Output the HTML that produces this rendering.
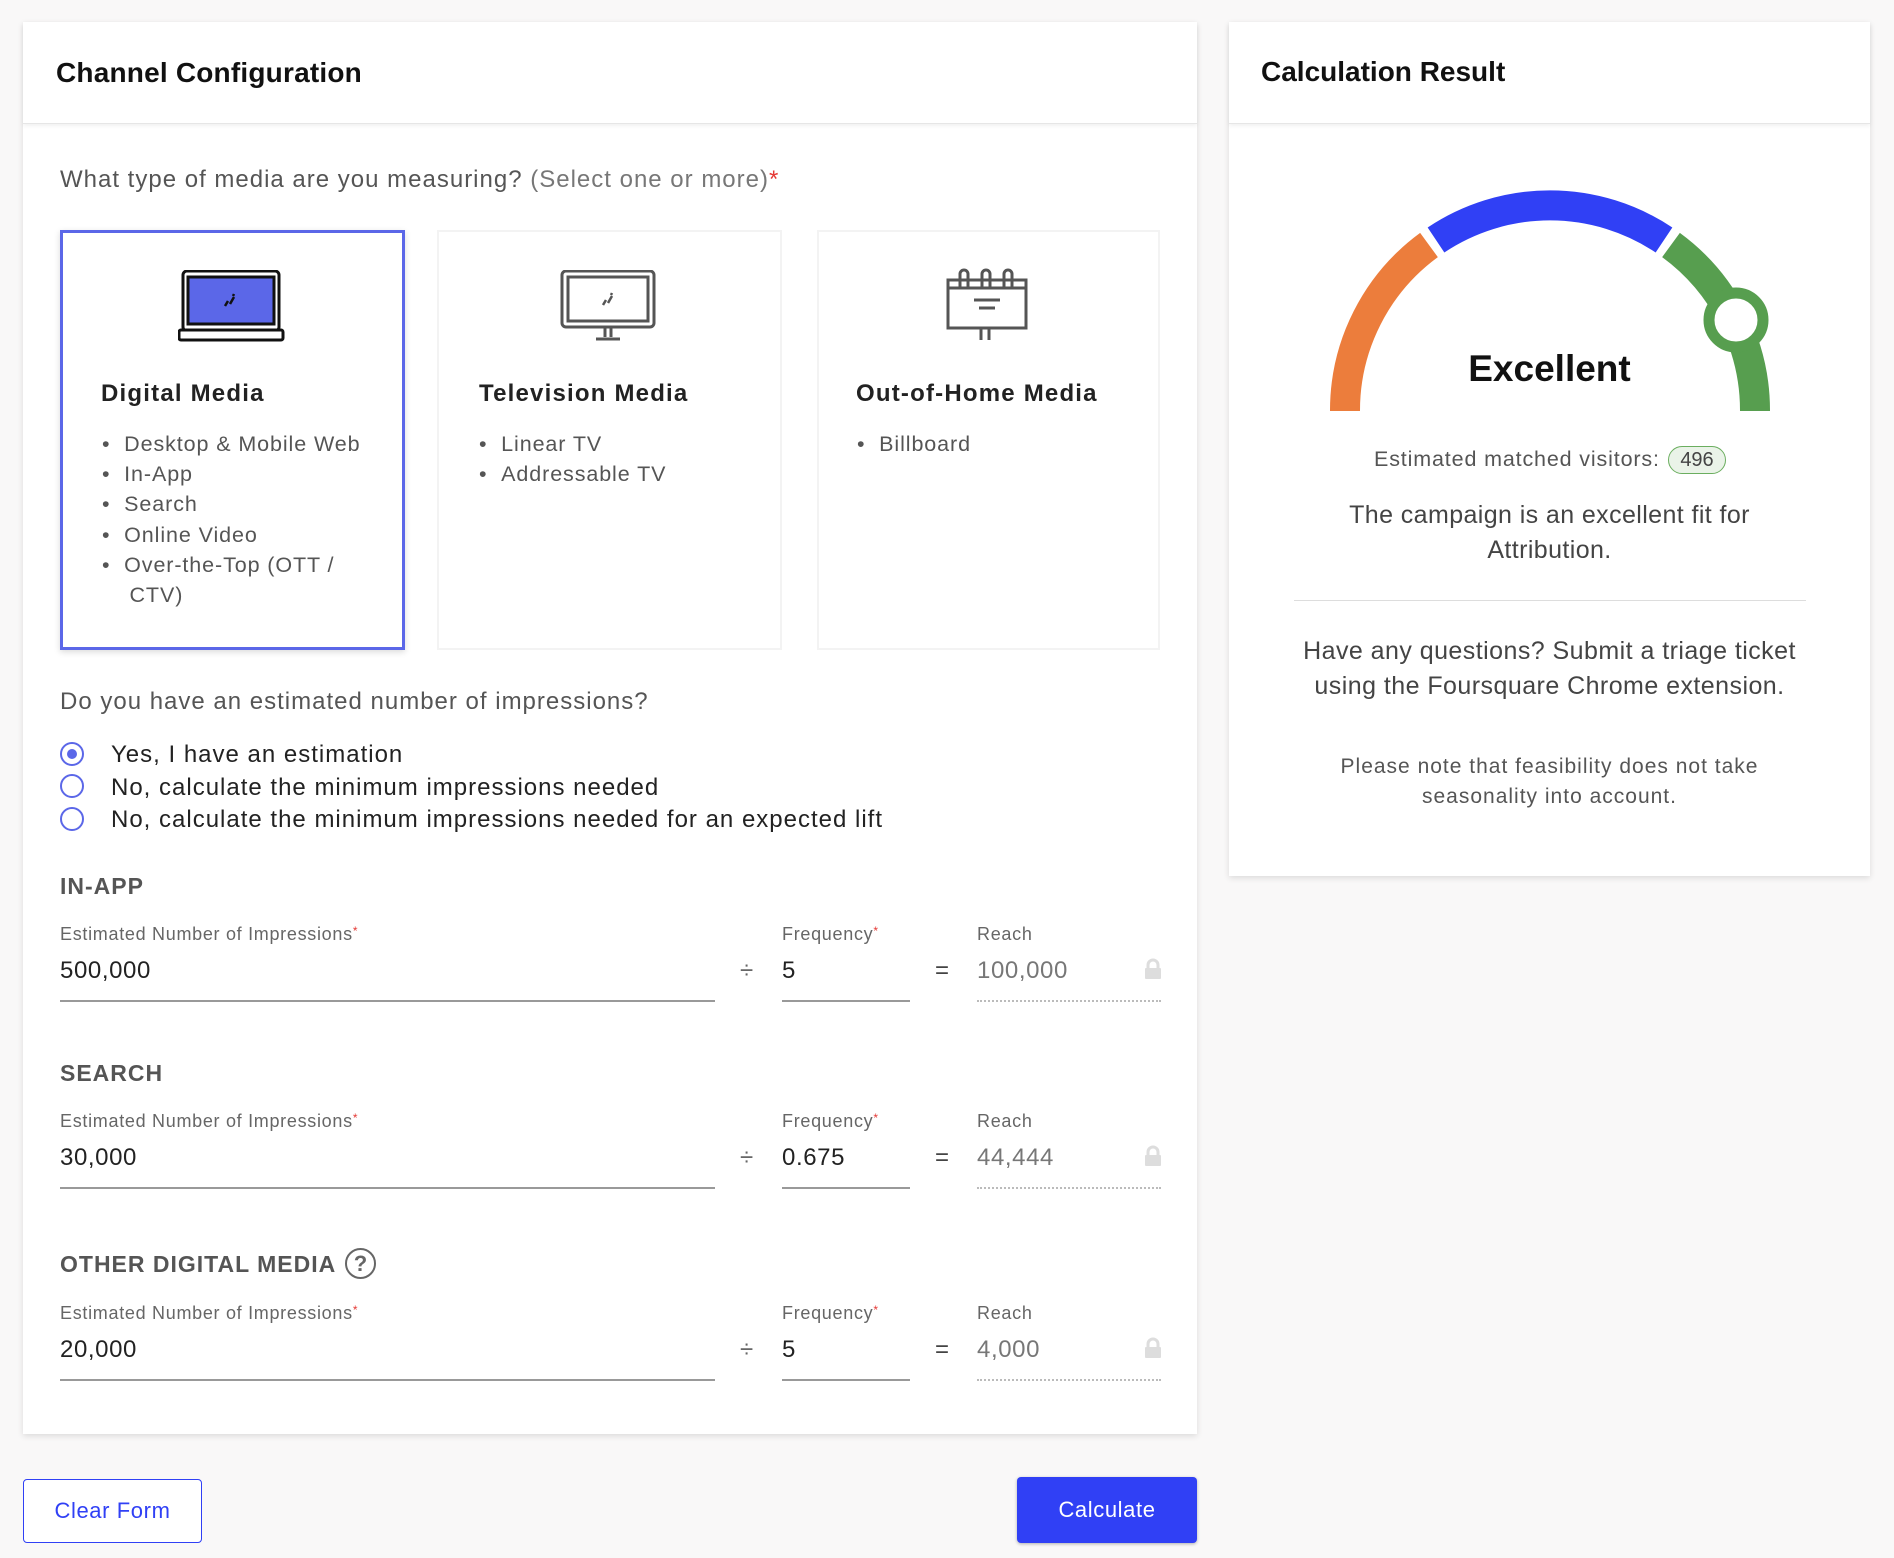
<!DOCTYPE html>
<html><head><meta charset="utf-8"><style>
*{margin:0;padding:0;box-sizing:border-box}
body{width:1894px;height:1558px;background:#f9f8f8;font-family:"Liberation Sans",sans-serif;position:relative;overflow:hidden;color:#222}
.a{position:absolute;white-space:nowrap}
.card{position:absolute;background:#fff;box-shadow:0 2px 6px rgba(0,0,0,.12)}
.hdr{position:absolute;left:0;right:0;top:0;height:102px;border-bottom:1px solid #e6e6e6;box-shadow:0 2px 4px rgba(0,0,0,.06)}
.mc{position:absolute;top:230px;height:420px;border:2px solid #f3f3f3;background:#fff}
.mt{position:absolute;font-size:24px;font-weight:bold;color:#222;letter-spacing:1.2px}
.li{position:absolute;font-size:21.5px;color:#555;letter-spacing:.9px}
.lbl{font-size:18px;color:#666;letter-spacing:.7px}
.val{font-size:24px;color:#222;letter-spacing:.6px}
.ln{position:absolute;height:2px;background:#999}
.dl{position:absolute;height:0;border-top:2px dotted #bbb}
.sec{font-size:23px;font-weight:bold;color:#555;letter-spacing:1px}
.rd{position:absolute;width:24px;height:24px;border:2px solid #5b67e8;border-radius:50%}
.ast{color:#e53935;font-size:12px;vertical-align:top}
</style></head><body>

<div class="card" style="left:23px;top:22px;width:1174px;height:1412px">
 <div class="hdr"></div>
</div>
<div class="a" style="left:56px;top:57px;font-size:28px;font-weight:bold;color:#111;letter-spacing:.2px">Channel Configuration</div>

<div class="card" style="left:1229px;top:22px;width:641px;height:854px">
 <div class="hdr"></div>
</div>
<div class="a" style="left:1261px;top:56px;font-size:28px;font-weight:bold;color:#111">Calculation Result</div>

<div class="a" style="left:60px;top:166px;font-size:24px;color:#555;letter-spacing:1px">What type of media are you measuring? <span style="color:#777">(Select one or more)</span><span style="color:#e53935">*</span></div>

<div class="mc" style="left:60px;width:345px;border:3px solid #5b67e8;box-shadow:0 2px 6px rgba(0,0,0,.15)"></div>
<div class="mc" style="left:437px;width:345px"></div>
<div class="mc" style="left:817px;width:343px"></div>

<!-- laptop -->
<svg class="a" style="left:178px;top:270px" width="110" height="72" viewBox="0 0 110 72">
 <rect x="5" y="1" width="96" height="60" rx="4" fill="#fff" stroke="#111" stroke-width="3"/>
 <rect x="10" y="7" width="86" height="47" fill="#5b67e8" stroke="#111" stroke-width="3"/>
 <rect x="1" y="60" width="104" height="10" rx="2" fill="#fff" stroke="#111" stroke-width="3"/>
 <path d="M47 36l3-5M52 34l4-7M55 26l1-2" stroke="#111" stroke-width="2.5" fill="none"/>
</svg>
<!-- tv -->
<svg class="a" style="left:558px;top:270px" width="100" height="72" viewBox="0 0 100 72">
 <rect x="4" y="1" width="92" height="56" rx="4" fill="#fff" stroke="#555" stroke-width="3"/>
 <rect x="10" y="7" width="80" height="44" fill="#fff" stroke="#555" stroke-width="3"/>
 <path d="M45 35l3-5M50 33l4-7M53 25l1-2" stroke="#555" stroke-width="2.5" fill="none"/>
 <path d="M47 57v10M53 57v10M38 69h24" stroke="#555" stroke-width="3"/>
</svg>
<!-- billboard -->
<svg class="a" style="left:944px;top:268px" width="86" height="74" viewBox="0 0 86 74">
 <rect x="4" y="12" width="78" height="48" fill="#fff" stroke="#555" stroke-width="3"/>
 <path d="M16 20V6a4 4 0 018 0v14M38 20V6a4 4 0 018 0v14M60 20V6a4 4 0 018 0v14" fill="none" stroke="#555" stroke-width="3"/>
 <path d="M4 20h78M30 32h26M35 40h16M37 60v12M45 60v12" stroke="#555" stroke-width="3"/>
</svg>

<div class="mt" style="left:101px;top:380px">Digital Media</div>
<div class="mt" style="left:479px;top:380px">Television Media</div>
<div class="mt" style="left:856px;top:380px">Out-of-Home Media</div>

<div class="li" style="left:102px;top:429px;line-height:30.2px">• &nbsp;Desktop &amp; Mobile Web<br>• &nbsp;In-App<br>• &nbsp;Search<br>• &nbsp;Online Video<br>• &nbsp;Over-the-Top (OTT /<br>&nbsp;&nbsp;&nbsp;&nbsp;CTV)</div>
<div class="li" style="left:479px;top:429px;line-height:30.2px">• &nbsp;Linear TV<br>• &nbsp;Addressable TV</div>
<div class="li" style="left:857px;top:429px;line-height:30.2px">• &nbsp;Billboard</div>

<div class="a" style="left:60px;top:688px;font-size:24px;color:#555;letter-spacing:1px">Do you have an estimated number of impressions?</div>
<div class="rd" style="left:60px;top:742px"><div style="position:absolute;left:5px;top:5px;width:10px;height:10px;border-radius:50%;background:#5b67e8"></div></div>
<div class="rd" style="left:60px;top:774px"></div>
<div class="rd" style="left:60px;top:807px"></div>
<div class="a" style="left:111px;top:739px;font-size:24px;line-height:32.5px;color:#222;letter-spacing:1px">Yes, I have an estimation<br>No, calculate the minimum impressions needed<br>No, calculate the minimum impressions needed for an expected lift</div>

<!-- rows -->
<div class="a sec" style="left:60px;top:873px">IN-APP</div>
<div class="a lbl" style="left:60px;top:924px">Estimated Number of Impressions<span class="ast">*</span></div>
<div class="a lbl" style="left:782px;top:924px">Frequency<span class="ast">*</span></div>
<div class="a lbl" style="left:977px;top:924px">Reach</div>
<div class="a val" style="left:60px;top:957px">500,000</div>
<div class="a val" style="left:740px;top:957px;color:#666">÷</div>
<div class="a val" style="left:782px;top:957px">5</div>
<div class="a val" style="left:935px;top:957px;color:#444">=</div>
<div class="a val" style="left:977px;top:957px;color:#777">100,000</div>
<div class="ln" style="left:60px;top:1000px;width:655px"></div>
<div class="ln" style="left:782px;top:1000px;width:128px"></div>
<div class="dl" style="left:977px;top:1000px;width:184px"></div>

<div class="a sec" style="left:60px;top:1060px">SEARCH</div>
<div class="a lbl" style="left:60px;top:1111px">Estimated Number of Impressions<span class="ast">*</span></div>
<div class="a lbl" style="left:782px;top:1111px">Frequency<span class="ast">*</span></div>
<div class="a lbl" style="left:977px;top:1111px">Reach</div>
<div class="a val" style="left:60px;top:1144px">30,000</div>
<div class="a val" style="left:740px;top:1144px;color:#666">÷</div>
<div class="a val" style="left:782px;top:1144px">0.675</div>
<div class="a val" style="left:935px;top:1144px;color:#444">=</div>
<div class="a val" style="left:977px;top:1144px;color:#777">44,444</div>
<div class="ln" style="left:60px;top:1187px;width:655px"></div>
<div class="ln" style="left:782px;top:1187px;width:128px"></div>
<div class="dl" style="left:977px;top:1187px;width:184px"></div>

<div class="a sec" style="left:60px;top:1251px">OTHER DIGITAL MEDIA</div>
<div class="a" style="left:345px;top:1248px;width:31px;height:31px;border:2.5px solid #666;border-radius:50%;font-size:22px;font-weight:bold;color:#666;text-align:center;line-height:27px">?</div>
<div class="a lbl" style="left:60px;top:1303px">Estimated Number of Impressions<span class="ast">*</span></div>
<div class="a lbl" style="left:782px;top:1303px">Frequency<span class="ast">*</span></div>
<div class="a lbl" style="left:977px;top:1303px">Reach</div>
<div class="a val" style="left:60px;top:1336px">20,000</div>
<div class="a val" style="left:740px;top:1336px;color:#666">÷</div>
<div class="a val" style="left:782px;top:1336px">5</div>
<div class="a val" style="left:935px;top:1336px;color:#444">=</div>
<div class="a val" style="left:977px;top:1336px;color:#777">4,000</div>
<div class="ln" style="left:60px;top:1379px;width:655px"></div>
<div class="ln" style="left:782px;top:1379px;width:128px"></div>
<div class="dl" style="left:977px;top:1379px;width:184px"></div>

<!-- locks -->
<svg class="a" style="left:1144px;top:958px" width="18" height="22" viewBox="0 0 18 22"><path d="M4 10V7a5 5 0 0110 0v3" fill="none" stroke="#ddd" stroke-width="3"/><rect x="1" y="10" width="16" height="11" rx="1" fill="#ddd"/></svg>
<svg class="a" style="left:1144px;top:1145px" width="18" height="22" viewBox="0 0 18 22"><path d="M4 10V7a5 5 0 0110 0v3" fill="none" stroke="#ddd" stroke-width="3"/><rect x="1" y="10" width="16" height="11" rx="1" fill="#ddd"/></svg>
<svg class="a" style="left:1144px;top:1337px" width="18" height="22" viewBox="0 0 18 22"><path d="M4 10V7a5 5 0 0110 0v3" fill="none" stroke="#ddd" stroke-width="3"/><rect x="1" y="10" width="16" height="11" rx="1" fill="#ddd"/></svg>

<!-- buttons -->
<div class="a" style="left:23px;top:1479px;width:179px;height:64px;border:1.5px solid #3040f5;border-radius:4px;background:#fff;color:#3040f5;font-size:22px;text-align:center;line-height:61px;letter-spacing:.6px">Clear Form</div>
<div class="a" style="left:1017px;top:1477px;width:180px;height:66px;border-radius:4px;background:#3040f5;color:#fff;font-size:22px;text-align:center;line-height:66px;box-shadow:0 1px 3px rgba(0,0,0,.3);letter-spacing:.6px">Calculate</div>

<!-- gauge -->
<svg class="a" style="left:1320px;top:180px" width="460" height="240" viewBox="1320 180 460 240">
 <g fill="none" stroke-width="30">
  <path d="M1345 411 A205 205 0 0 1 1429 245" stroke="#ec7d3c"/>
  <path d="M1436 240 A205 205 0 0 1 1664 240" stroke="#3040f5"/>
  <path d="M1671 245 A205 205 0 0 1 1755 411" stroke="#579e4f"/>
 </g>
 <circle cx="1736" cy="320" r="27" fill="#fff" stroke="#579e4f" stroke-width="11"/>
</svg>
<div class="a" style="left:1229px;width:641px;top:348px;text-align:center;font-size:37px;font-weight:bold;color:#111">Excellent</div>
<div class="a" style="left:1374px;top:447px;font-size:21.5px;color:#555;letter-spacing:.85px">Estimated matched visitors:</div>
<div class="a" style="left:1668px;top:446px;width:58px;height:28px;border:1.5px solid #6bae5f;border-radius:14px;background:#eaf3e8;font-size:20px;color:#444;text-align:center;line-height:26px">496</div>
<div class="a" style="left:1229px;width:641px;top:498px;text-align:center;font-size:25px;line-height:35px;color:#444;white-space:normal;letter-spacing:.4px">The campaign is an excellent fit for<br>Attribution.</div>
<div class="a" style="left:1294px;top:600px;width:512px;height:1px;background:#ddd"></div>
<div class="a" style="left:1229px;width:641px;top:634px;text-align:center;font-size:25px;line-height:35px;color:#444;letter-spacing:.45px">Have any questions? Submit a triage ticket<br>using the Foursquare Chrome extension.</div>
<div class="a" style="left:1229px;width:641px;top:752px;text-align:center;font-size:21px;line-height:30px;color:#555;letter-spacing:1px">Please note that feasibility does not take<br>seasonality into account.</div>
</body></html>
